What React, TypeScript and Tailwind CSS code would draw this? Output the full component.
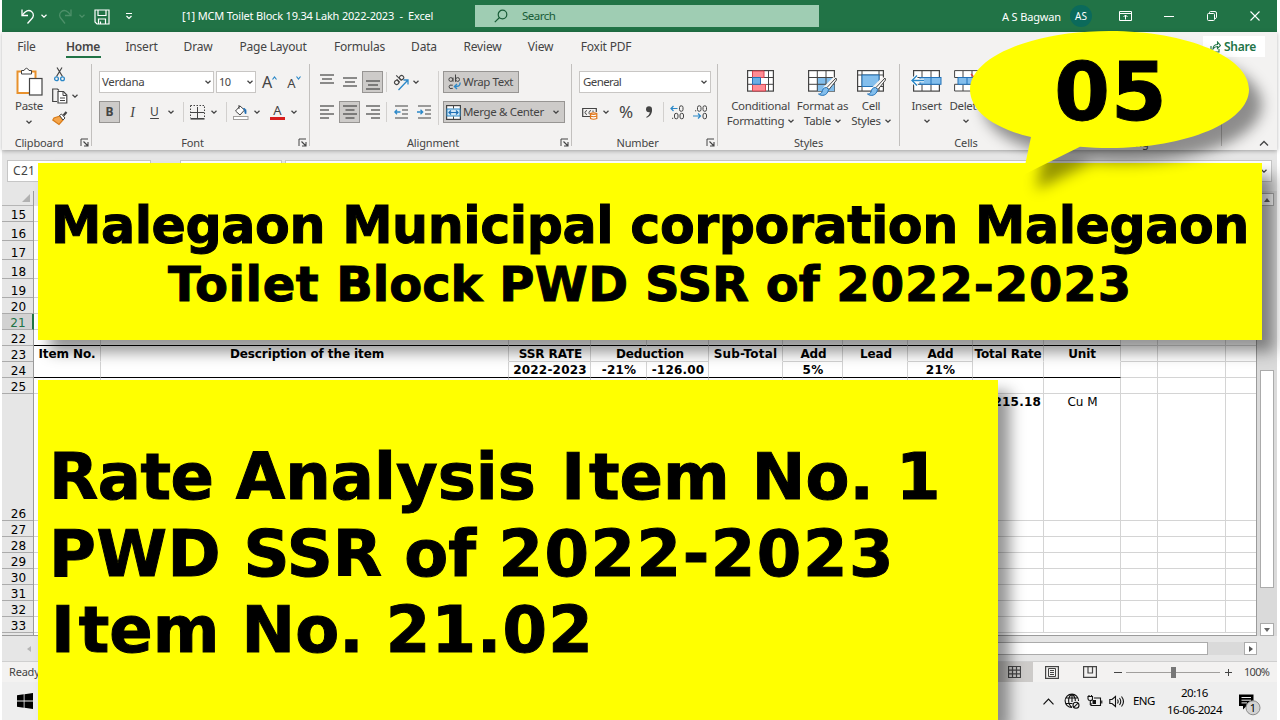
import type { ReactNode } from "react";

const INK = "#444444";
const BLUE = "#2b88c8";

function Chevron({ className = "" }: { className?: string }) {
  return (
    <svg viewBox="0 0 6 4" className={`h-1 w-1.5 shrink-0 ${className}`} fill="none" stroke={INK} strokeWidth="1.3">
      <path d="M0.5 0.7L3 3.1L5.5 0.7" />
    </svg>
  );
}

function Svg({ w, h, className = "", children }: { w: number; h: number; className?: string; children: ReactNode }) {
  return (
    <svg width={w} height={h} viewBox={`0 0 ${w} ${h}`} className={`shrink-0 ${className}`} fill="none" stroke={INK} strokeWidth="1.2">
      {children}
    </svg>
  );
}

function Launcher() {
  return (
    <Svg w={9} h={9} className="absolute right-[2px] -bottom-px">
      <path d="M1 8V1H8" strokeWidth="1" />
      <path d="M3.5 3.5L7.5 7.5M8 4V8H4" strokeWidth="1.1" />
    </Svg>
  );
}

function Group({ label, width, launcher, pad = "", children }: { label: string; width: string; launcher?: boolean; pad?: string; children?: ReactNode }) {
  return (
    <div className={`relative flex h-[82px] shrink-0 flex-col border-r border-[#c2c0be] ${width}`}>
      <div className="h-[71px] shrink-0">{children}</div>
      <div className={`flex h-4 shrink-0 items-center justify-center whitespace-nowrap text-[11px] leading-4 tracking-[-0.15px] ${pad}`}>{label}</div>
      {launcher && <Launcher />}
    </div>
  );
}

function Sep({ className = "" }: { className?: string }) {
  return <div className={`h-5 w-px shrink-0 bg-[#d2d0ce] ${className}`} />;
}

function Lines({ rows, className = "" }: { rows: [number, number, number][]; className?: string }) {
  return (
    <Svg w={14} h={14} className={className}>
      {rows.map(([x, y, w]) => (
        <path key={y} d={`M${x} ${y}h${w}`} />
      ))}
    </Svg>
  );
}

function BigButton({ icon, lines, width, caret }: { icon: ReactNode; lines: string[]; width: string; caret?: boolean }) {
  return (
    <div className={`flex shrink-0 flex-col items-center pt-1.5 ${width}`}>
      <div className="flex h-7 items-start">{icon}</div>
      {lines.map((line, i) => (
        <div key={line} className="flex h-[15px] items-center gap-1 whitespace-nowrap text-[11.500px] tracking-[-0.3px]">
          {line}
          {i === 1 && <Chevron />}
        </div>
      ))}
      {caret && <Chevron className="mt-1.5" />}
    </div>
  );
}

function Brush() {
  return (
    <>
      <path d="M27.5 8.5L17 19" stroke="#f3f2f1" strokeWidth="5" />
      <path d="M28 8L19 17.5L21 19.5L28.5 10Z" fill="#fff" strokeWidth="1" />
      <path d="M18.5 17.5c-3 0-4 2-4.500 4.500c-0.500 1.500-2 2-3.500 2c3 2.500 9 2 10-4.500z" fill="#83beec" stroke="#2372b8" strokeWidth="1" />
    </>
  );
}

function TitleBar() {
  return (
    <header className="flex h-8 shrink-0 items-center bg-[#217346] text-[11px] text-white">
      <Svg w={18} h={18} className="ml-[17px]">
        <g stroke="#fff" strokeWidth="1.3">
          <path d="M3 2.500V8.500H9" />
          <path d="M3.500 8C6 3.500 10 2.500 12.500 4.500C15.500 7 14.500 10 12.500 12L8.500 16.500" />
        </g>
      </Svg>
      <svg viewBox="0 0 6 4" className="ml-1 h-1 w-1.5" fill="none" stroke="#fff" strokeWidth="1.2"><path d="M.5 .7L3 3.100L5.500 .7" /></svg>
      <Svg w={16} h={18} className="ml-2.5">
        <g stroke="#4d9069" strokeWidth="1.300">
          <path d="M14 2.500V8.500H8" />
          <path d="M13.500 8C11 3.500 7 2.500 4.500 4.500C1.500 7 2.500 10 4.500 12L8 16.500" />
        </g>
      </Svg>
      <svg viewBox="0 0 6 4" className="ml-1.5 h-1 w-1.5" fill="none" stroke="#4d9069" strokeWidth="1.2"><path d="M.5 .7L3 3.100L5.500 .7" /></svg>
      <Svg w={16} h={16} className="ml-[9px] mt-0.5">
        <g stroke="#fff" strokeWidth="1.2">
          <path d="M1 1H15V15H3L1 13Z" />
          <path d="M4 1V6.500H12V1M4.500 15V10H11.500V15M6.500 15V12.500" />
        </g>
      </Svg>
      <Svg w={8} h={8} className="ml-[15px]">
        <path d="M1 1.500H7M1.500 4L4 6.500L6.500 4" stroke="#fff" />
      </Svg>
      <div className="ml-[49px] w-[252px] whitespace-pre tracking-[-0.19px]">{"[1] MCM Toilet Block 19.34 Lakh 2022-2023  -  Excel"}</div>
      <div className="ml-[41px] flex h-[22px] w-[344px] items-center bg-[#9fcdb3] text-[11.500px] text-[#185c37]">
        <Svg w={14} h={14} className="ml-[19px]">
          <g stroke="#185c37"><circle cx="8.500" cy="5.500" r="4.300" /><path d="M5.500 8.500L.8 13.200" /></g>
        </Svg>
        <span className="ml-3.5 tracking-[-0.5px]">Search</span>
      </div>
      <div className="ml-[183px] mt-0.5 w-[59px] whitespace-nowrap tracking-[-0.15px]">A S Bagwan</div>
      <div className="ml-[9px] flex size-[22px] items-center justify-center rounded-full bg-[#0b6a5b] text-[10px]">AS</div>
      <Svg w={13} h={10} className="ml-[27px]">
        <g stroke="#fff" strokeWidth="1"><path d="M.5 .5H12.500V9.500H.5ZM.5 2.500H12.500M6.500 8.500V4M4.500 6L6.500 4L8.500 6" /></g>
      </Svg>
      <Svg w={10} h={1} className="ml-8"><path d="M0 .5H10" stroke="#fff" strokeWidth="1" /></Svg>
      <Svg w={10} h={10} className="ml-[33px]">
        <g stroke="#fff" strokeWidth="1"><rect x=".5" y="2.500" width="7" height="7" rx="1" /><path d="M2.500 2.500V1.500Q2.500 .5 3.500 .5H8Q9.500 .5 9.500 2V6.500Q9.500 7.500 7.500 7.500" /></g>
      </Svg>
      <Svg w={10} h={10} className="ml-[33px]"><path d="M.5 .5L9.500 9.500M9.500 .5L.5 9.500" stroke="#fff" strokeWidth="1.1" /></Svg>
    </header>
  );
}

function Tabs() {
  const tabs: [string, string][] = [
    ["File", "w-[49px]"], ["Home", "w-16"], ["Insert", "w-[53px]"], ["Draw", "w-[60px]"], ["Page Layout", "w-[90px]"],
    ["Formulas", "w-[83px]"], ["Data", "w-[46px]"], ["Review", "w-[71px]"], ["View", "w-[45px]"], ["Foxit PDF", "w-[86px]"],
  ];
  return (
    <nav className="flex h-8 shrink-0 text-[12px] tracking-[-0.2px]">
      {tabs.map(([name, width]) => (
        <div key={name} className={`flex justify-center whitespace-nowrap pt-1.5 ${width}`}>
          {name === "Home" ? (
            <span className="h-5 w-[35px] border-b-2 border-[#217346] text-center font-semibold leading-[17px] tracking-[-0.3px]">{name}</span>
          ) : (
            <span className="leading-[17px]">{name}</span>
          )}
        </div>
      ))}
      <div className="mt-1 ml-auto mr-3 flex h-[21px] w-[62px] items-center bg-white pl-[7px] font-semibold text-[#217346]">
        <Svg w={11} h={12}>
          <g stroke="#217346" strokeWidth="1.1"><path d="M1 5V11H9V8M3 8C3 5 5 3.500 7.500 3.500V1L10.500 4.500L7.500 7.500V5.500C5.500 5.500 4 6.500 3 8Z" /></g>
        </Svg>
        <span className="ml-[3px] tracking-[-0.25px]">Share</span>
      </div>
    </nav>
  );
}

function Clipboard() {
  return (
    <Group label="Clipboard" width="w-[90px]" launcher pad="pr-[15px]">
      <div className="flex">
        <div className="ml-3 flex w-[30px] flex-col items-center pt-[3px]">
          <Svg w={27} h={29}>
            <rect x="1.500" y="4.500" width="18" height="21.500" fill="#fff" stroke="#e8912d" strokeWidth="2" />
            <path d="M5.500 7V3.500H8Q10.500 -1 13 3.500H15.500V7Z" fill="#fff" strokeWidth="1" />
            <rect x="13.500" y="11.500" width="12.500" height="16.500" fill="#fff" />
          </Svg>
          <span className="mt-0.5 text-[11.500px] leading-4 tracking-[-0.3px]">Paste</span>
          <Chevron className="mt-1.5" />
        </div>
        <div className="ml-2 flex flex-col pt-[3px]">
          <Svg w={12} h={15} className="ml-0.5">
            <path d="M3 .5L8.500 9.500M8 .5L2.500 9.500" />
            <g stroke={BLUE} strokeWidth="1.3"><circle cx="2.500" cy="11.800" r="1.900" /><circle cx="8.500" cy="11.800" r="1.900" /></g>
          </Svg>
          <div className="mt-1.5 flex items-center">
            <Svg w={16} h={16}>
              <path d="M5 13.500H.7V1H5.500L7 2.500" />
              <path d="M6 3.500H11.500L14.800 7V15H6Z" fill="#fff" />
              <path d="M11 4V7.500H14.500M8 10H13M8 12.500H13" strokeWidth="1" />
            </Svg>
            <Chevron className="ml-1" />
          </div>
          <Svg w={16} h={15} className="mt-[7px]">
            <path d="M8 5L2 7L.8 9L7 13.500L11 9Z" fill="#f5a54a" stroke="#d77b19" />
            <path d="M7.500 4.500L9.500 3L13 7L11 9Z" fill="#fff" strokeWidth="1" />
            <path d="M11.500 4.500L14.500 1" strokeWidth="2.200" />
          </Svg>
        </div>
      </div>
    </Group>
  );
}

function FontGroup() {
  return (
    <Group label="Font" width="w-[218px]" launcher pad="pr-4">
      <div className="flex items-center pl-[7px] pt-[7px]">
        <div className="flex h-[22px] w-[115px] items-center justify-between border border-[#c8c6c4] bg-white pr-0.5 pl-0.5 text-[11.500px] tracking-[-0.35px]">
          Verdana<Chevron />
        </div>
        <div className="ml-0.5 flex h-[22px] w-10 items-center justify-between border border-[#c8c6c4] bg-white pr-0.5 pl-0.5 text-[11px] tracking-[-0.5px]">
          10<Chevron />
        </div>
        <span className="ml-1.5 text-[16px] leading-5">A</span>
        <Svg w={5} h={4} className="mb-2"><path d="M.5 3.500L2.500 1L4.500 3.500" stroke={BLUE} /></Svg>
        <span className="ml-2.5 mt-0.5 text-[13px] leading-5">A</span>
        <Svg w={5} h={4} className="mb-2"><path d="M.5 .5L2.500 3L4.500 .5" stroke={BLUE} /></Svg>
      </div>
      <div className="mt-2 flex h-[22px] items-center pl-[7px]">
        <div className="flex h-[22px] w-[21px] items-center justify-center border border-[#979593] bg-[#cdcbc9] text-[12px] font-bold">B</div>
        <span className="ml-2 w-[9px] text-center font-['Liberation_Serif'] text-[14px] italic">I</span>
        <span className="ml-[13px] w-[9px] text-center text-[12px] underline underline-offset-2">U</span>
        <Chevron className="ml-[9px]" />
        <Sep className="ml-[9px]" />
        <Svg w={15} h={15} className="ml-1.5">
          <path d="M.5 .5H14.500V13M.5 .5V13" strokeDasharray="1.500 1.500" strokeWidth="1" />
          <path d="M.5 13.800H14.500" strokeWidth="1.600" />
          <path d="M7.500 2V13M1 7.500H14" strokeWidth="1" />
        </Svg>
        <Chevron className="ml-1.5" />
        <Sep className="ml-[9px]" />
        <Svg w={16} h={15} className="ml-1.5">
          <path d="M7 1L2.500 6L7 10L11.500 5Z" fill="#fff" strokeWidth="1" />
          <path d="M6 0V4" strokeWidth="1" />
          <path d="M10.500 3.500C13 3 13.500 6 12.800 9C11.500 8.500 12 6 11.500 5Z" fill="#1f6fb5" stroke="#1f6fb5" strokeWidth=".8" />
          <rect x=".5" y="11.500" width="14.500" height="3" fill="#fff" stroke="#a19f9d" strokeWidth="1" />
        </Svg>
        <Chevron className="ml-[5px]" />
        <div className="ml-2.5 flex h-4 w-[15px] flex-col items-center border-b-[3px] border-[#d81e1e]">
          <span className="text-[13px] leading-[13px]">A</span>
        </div>
        <Chevron className="ml-1.5" />
      </div>
    </Group>
  );
}

function Alignment() {
  return (
    <Group label="Alignment" width="w-[262px]" launcher pad="pr-[15px]">
      <div className="flex pt-[7px]">
        <div className="flex w-32 flex-col gap-2 pl-2.5">
          <div className="flex h-[22px] items-center">
            <Lines className="mb-1.5" rows={[[0, 3, 14], [2, 7, 10], [0, 11, 14]]} />
            <Lines className="ml-[9px]" rows={[[0, 3, 14], [2, 7, 10], [0, 11, 14]]} />
            <div className="ml-[5px] flex h-[22px] w-[21px] items-end justify-center border border-[#979593] bg-[#cdcbc9]">
              <Lines rows={[[0, 3, 14], [2, 7, 10], [0, 11, 14]]} />
            </div>
            <Sep className="ml-[3px]" />
            <Svg w={17} h={17} className="ml-1.5">
              <g transform="rotate(-45 5 6)" strokeWidth="1.1">
                <circle cx="2.300" cy="6.800" r="2.100" /><path d="M4.600 4.500V9" />
                <circle cx="9.300" cy="6.800" r="2.100" /><path d="M7 1.500V9" />
              </g>
              <path d="M5.500 16L14.500 6.500M10.500 6H15V10.500" stroke={BLUE} strokeWidth="1.3" />
            </Svg>
            <Chevron className="ml-[3px]" />
          </div>
          <div className="flex h-[22px] items-center">
            <Lines rows={[[0, 1, 14], [0, 5, 9], [0, 9, 14], [0, 13, 9]]} />
            <div className="ml-[5px] flex h-[22px] w-[21px] items-center justify-center border border-[#979593] bg-[#cdcbc9]">
              <Lines rows={[[0, 1, 14], [2.5, 5, 9], [0, 9, 14], [2.5, 13, 9]]} />
            </div>
            <Lines className="ml-[6px]" rows={[[0, 1, 14], [5, 5, 9], [0, 9, 14], [5, 13, 9]]} />
            <Sep className="ml-[6px]" />
            <Svg w={14} h={14} className="ml-[7px]">
              <path d="M1 1H14M8 5H14M8 9H14M1 13H14" />
              <path d="M.8 7H6.500M3 4.800L.8 7L3 9.200" stroke={BLUE} strokeWidth="1.3" />
            </Svg>
            <Svg w={14} h={14} className="ml-[9px]">
              <path d="M1 1H14M8 5H14M8 9H14M1 13H14" />
              <path d="M0 7H5.700M3.500 4.800L5.700 7L3.500 9.200" stroke={BLUE} strokeWidth="1.3" />
            </Svg>
          </div>
        </div>
        <div className="h-[54px] w-px bg-[#d2d0ce]" />
        <div className="ml-1 flex flex-col items-start gap-2 whitespace-nowrap text-[11.500px]">
          <div className="flex h-[22px] w-[76px] items-center border border-[#979593] bg-[#cdcbc9] pl-1 tracking-[-0.4px]">
            <Svg w={13} h={16}>
              <g strokeWidth="1">
                <circle cx="2.800" cy="5.500" r="1.900" /><path d="M5 3.500V7.800M7.500 .5V7.800" /><circle cx="9.600" cy="5.500" r="1.900" />
                <path d="M4.800 11.200Q1 10.200 1 12.800T4.800 14.400" />
              </g>
              <path d="M12 8.500C12.500 12 10 12.500 6.500 12.500M9 10L6.500 12.500L9 15" stroke={BLUE} strokeWidth="1.4" />
            </Svg>
            <span className="ml-0.5">Wrap Text</span>
          </div>
          <div className="flex h-[22px] w-[122px] items-center border border-[#979593] bg-[#cdcbc9] pl-0.5 tracking-[-0.35px]">
            <Svg w={15} h={15}>
              <rect x=".6" y=".6" width="13.800" height="13.800" fill="#fff" />
              <rect x="1" y="4" width="13" height="7" fill="#cfe6f7" stroke={BLUE} strokeWidth="1" />
              <path d="M7.500 1V3.500M7.500 11.500V14" strokeWidth="1" />
              <path d="M3 7.500H12M5 5.500L3 7.500L5 9.500M10 5.500L12 7.500L10 9.500" stroke="#1f6fb5" strokeWidth="1.2" />
            </Svg>
            <span className="ml-0.5">Merge &amp; Center</span>
            <Chevron className="ml-auto mr-[5px]" />
          </div>
        </div>
      </div>
    </Group>
  );
}

function NumberGroup() {
  return (
    <Group label="Number" width="w-[146px]" launcher pad="pr-[14px]">
      <div className="flex flex-col gap-2 pl-[7px] pt-[7px]">
        <div className="flex h-[22px] w-[132px] items-center justify-between border border-[#c8c6c4] bg-white px-[3px] text-[11.500px] tracking-[-0.6px]">
          General<Chevron />
        </div>
        <div className="flex h-[22px] items-center">
          <Svg w={16} h={13} className="ml-[3px] mt-0.5">
            <path d="M8 9.500H.7V1.500H14.300V5" />
            <path d="M5 3.500Q3 4 3 5.500T5 7.500M9 3.500Q7 4 7 5.500T8 7.500M11 3.500V5" strokeWidth="1" />
            <path d="M8.500 6.500V11.500Q11.500 13 14.800 11.500V6.500Q11.500 5 8.500 6.500ZM8.500 9Q11.500 10.500 14.800 9M8.500 6.700Q11.500 8 14.800 6.700" fill="#fff" stroke="#e0761a" />
          </Svg>
          <Chevron className="ml-[5px]" />
          <span className="ml-[9px] w-4 text-center text-[17px] leading-5">%</span>
          <svg viewBox="0 0 8 12" className="ml-[11px] h-3 w-2 shrink-0" fill={INK}>
            <circle cx="4" cy="3.200" r="3" />
            <path d="M7 3.200C7.300 7.500 5 10.500 1.600 11.700L1.200 11C3.500 9.800 4.800 8 4.800 5.500Z" />
          </svg>
          <Sep className="ml-2.5" />
          <Svg w={16} h={15} className="ml-1.5">
            <g strokeWidth="1">
              <rect x="9.500" y=".8" width="3.500" height="5.500" rx="1.700" />
              <rect x="4.500" y="8.300" width="3.500" height="5.500" rx="1.700" />
              <rect x="10" y="8.300" width="3.500" height="5.500" rx="1.700" />
              <path d="M2 13.300h1.200" />
            </g>
            <path d="M1 3.500H7.500M3.500 1L1 3.500L3.500 6" stroke={BLUE} strokeWidth="1.2" />
          </Svg>
          <Svg w={16} h={15} className="ml-[7px]">
            <g strokeWidth="1">
              <rect x="4.500" y=".8" width="3.500" height="5.500" rx="1.700" />
              <rect x="10" y=".8" width="3.500" height="5.500" rx="1.700" />
              <rect x="10" y="8.300" width="3.500" height="5.500" rx="1.700" />
              <path d="M2 5.800h1.200" />
            </g>
            <path d="M0 11H7.500M5 8.500L7.500 11L5 13.500" stroke={BLUE} strokeWidth="1.2" />
          </Svg>
        </div>
      </div>
    </Group>
  );
}

function StylesGroup() {
  return (
    <Group label="Styles" width="w-[182px]">
      <div className="flex">
        <BigButton width="w-[85px]" lines={["Conditional", "Formatting"]} icon={
          <Svg w={27} h={22}>
            <rect x=".6" y=".6" width="25.800" height="20.500" fill="#fff" />
            <path d="M.6 7.500H26.400M.6 14.300H26.400M5.500 1V21M21.500 1V21" strokeWidth="1" />
            <path d="M5.500 1H17V7.500H5.500ZM5.500 14.300H18.500V21H5.500Z" fill="#ff8c94" stroke="#d8434e" strokeWidth="1" />
            <path d="M5.500 7.500H13.500V14.300H5.500Z" fill="#6aaee5" stroke="#2372b8" strokeWidth="1" />
            <path d="M14 8H21V13.800H14Z" fill="#fff" stroke="none" />
          </Svg>
        } />
        <BigButton width="w-[39px]" lines={["Format as", "Table"]} icon={
          <Svg w={29} h={27}>
            <rect x=".6" y=".6" width="25.800" height="20.500" fill="#fff" />
            <rect x="9" y="7.500" width="17.400" height="13.600" fill="#83beec" stroke="none" />
            <path d="M.6 7.500H26.400M.6 14.300H26.400M9.300 1V21M18 1V21" strokeWidth="1" />
            <Brush />
          </Svg>
        } />
        <BigButton width="w-[58px]" lines={["Cell", "Styles"]} icon={
          <Svg w={29} h={27}>
            <rect x=".6" y=".6" width="25.800" height="20.500" fill="#fff" />
            <path d="M5 1V21M22 1V21M.6 5H26.400M.6 16.500H26.400" strokeWidth="1" />
            <rect x="5" y="5" width="17" height="11.500" fill="#83beec" stroke="#2372b8" strokeWidth="1" />
            <Brush />
          </Svg>
        } />
      </div>
    </Group>
  );
}

function CellsGroup() {
  return (
    <Group label="Cells" width="w-[133px]">
      <div className="flex">
        <BigButton width="w-[53px]" lines={["Insert"]} caret icon={
          <Svg w={31} h={22}>
            <rect x="2.600" y=".6" width="25.800" height="20.500" fill="#fff" />
            <path d="M2.600 7.500H28M2.600 14.300H28M11 1V21M20 1V21" strokeWidth="1" />
            <rect x="9" y="7.500" width="21" height="6.800" fill="#83beec" stroke="#2372b8" strokeWidth="1" />
            <path d="M20 7.500V14.300" stroke="#2372b8" strokeWidth="1" />
            <path d="M1 10.500H13M6 5.500L1 10.500L6 15.500" stroke="#fff" strokeWidth="3.500" />
            <path d="M1 10.500H13M6 5.500L1 10.500L6 15.500" stroke={BLUE} strokeWidth="1.4" />
          </Svg>
        } />
        <BigButton width="w-[26px]" lines={["Delete"]} caret icon={
          <Svg w={28} h={22} className="ml-1">
            <path d="M.6 .6H26V7.500H.6ZM.6 14.300H26V21H.6ZM9 1V7M18 1V7M9 14.500V21M18 14.500V21" fill="#fff" strokeWidth="1" />
            <path d="M4 7.500H22V14.300H4ZM13 7.500V14" fill="#83beec" stroke="#2372b8" strokeWidth="1" />
            <path d="M17 4L27 15M27 4L17 15" stroke="#e03b3b" strokeWidth="1.3" />
          </Svg>
        } />
      </div>
    </Group>
  );
}

type RowDef = [number, string];
const ROWS: RowDef[] = [
  [15, "h-4"], [16, "h-[19px]"], [17, "h-[19px]"], [18, "h-[19px]"], [19, "h-[19px]"], [20, "h-4"], [21, "h-4"], [22, "h-4"], [23, "h-4"], [24, "h-4"],
  [25, "h-4"], [26, "h-[127px]"], [27, "h-4"], [28, "h-4"], [29, "h-4"], [30, "h-4"], [31, "h-4"], [32, "h-4"], [33, "h-4"],
];

const COLS = ["w-[67px]", "w-[408px]", "w-[82px]", "w-[56px]", "w-[62px]", "w-[74px]", "w-[60px]", "w-[65px]", "w-[65px]", "w-[71px]", "w-[77px]", "w-[37px]", "w-[68px]", "w-[31px]"];

const TEXT: Record<number, string[]> = {
  24: ["", "", "2022-2023", "-21%", "-126.00", "", "5%", "", "21%"],
  26: ["", "", "", "", "", "", "", "", "", "1215.18", "Cu M"],
};

const HEADS: [string, string, boolean][] = [
  ["Item No.", "w-[67px]", false], ["Description of the item", "w-[408px] pl-[5px]", false], ["SSR RATE", "w-[82px] pl-0.5", true], ["Deduction", "w-[118px] pl-px", true],
  ["Sub-Total", "w-[74px] tracking-[0.2px]", false], ["Add", "w-[60px] pl-0.5", true], ["Lead", "w-[65px] pl-0.5", false], ["Add", "w-[65px] pl-px", true],
  ["Total Rate", "w-[71px]", false], ["Unit", "w-[77px]", false], ["", "w-[37px]", true], ["", "w-[68px]", true], ["", "w-[31px]", true],
];

function rowBorder(n: number, col: number) {
  if ((n === 22 || n === 24) && col < 11) return "border-b-black";
  return "border-b-[#d4d4d4]";
}

function Sheet() {
  return (
    <div className="flex h-[445px] shrink-0 font-['DejaVu_Sans','Open_Sans',sans-serif] text-[12px] text-black">
      <div className="flex w-8 shrink-0 flex-col border-r border-b border-[#9b9b9b] bg-[#e6e6e6]">
        <div className="flex h-[15px] shrink-0 items-end justify-end border-b border-[#b5b5b5] pr-[3px] pb-[3px]">
          <svg viewBox="0 0 8 8" className="size-2" fill="#b1b1b1"><path d="M8 0V8H0Z" /></svg>
        </div>
        {ROWS.map(([n, h]) => (
          <div key={n} className={`flex shrink-0 items-end justify-center border-b border-[#ababab] pl-0.5 leading-[12px] ${h} ${n === 21 ? "-mr-px border-r-2 border-r-[#217346] bg-[#d2d2d2] text-[#217346]" : ""}`}>
            {n}
          </div>
        ))}
      </div>
      <div className="flex w-[1223px] shrink-0 flex-col overflow-hidden border-r border-b border-[#9b9b9b] bg-white">
        <div className="h-[15px] shrink-0 bg-[#e6e6e6]" />
        {ROWS.map(([n, h]) => (
          <div key={n} className={`flex shrink-0 ${h}`}>
            {n === 23
              ? HEADS.map(([t, w, line], i) => (
                  <div key={i} className={`flex shrink-0 justify-center whitespace-nowrap border-r border-b border-r-[#d4d4d4] text-[12px] font-bold leading-[17px] tracking-[-0.1px] ${w} ${line ? "border-b-[#d4d4d4]" : "border-b-transparent"}`}>{t}</div>
                ))
              : COLS.map((w, i) => (
                  <div key={i} className={`flex shrink-0 whitespace-nowrap border-r border-b border-r-[#d4d4d4] text-[12px] leading-[17px] ${w} ${rowBorder(n, i)} ${i === 10 ? "font-normal" : "font-bold tracking-[0.2px]"} ${i === 9 ? "justify-end pr-0.5" : "justify-center pl-px"}`}>
                    {TEXT[n]?.[i] ?? ""}
                  </div>
                ))}
          </div>
        ))}
      </div>
      <div className="flex w-5 shrink-0 flex-col items-center bg-[#dadada] px-[3px] pt-[2px]">
        <div className="flex h-[13px] w-full items-center justify-center border border-[#ababab] bg-white"><svg viewBox="0 0 6 4" className="h-1 w-1.5" fill="#666"><path d="M0 4L3 0L6 4Z" /></svg></div>
        <div className="mt-[164px] h-[218px] w-full border border-[#ababab] bg-white" />
        <div className="mt-auto flex h-[13px] w-full items-center justify-center border border-[#ababab] bg-white"><svg viewBox="0 0 6 4" className="h-1 w-1.5" fill="#666"><path d="M0 0L3 4L6 0Z" /></svg></div>
      </div>
    </div>
  );
}

function StatusBar() {
  return (
    <div className="flex h-[21px] shrink-0 items-center border-t border-[#cfcfcf] bg-[#f3f2f1] text-[11px]">
      <span className="ml-[7px] mt-px tracking-[-0.2px]">Ready</span>
      <div className="ml-auto flex h-full w-[38px] items-center justify-center bg-[#cdcbc9]">
        <Svg w={13} h={12}><path d="M.5 .5H12.500V11.500H.5ZM.5 4.200H12.500M.5 7.800H12.500M4.500 .5V11.500M8.500 .5V11.500" /></Svg>
      </div>
      <Svg w={14} h={13} className="ml-3"><rect x=".6" y=".6" width="12.800" height="11.800" /><path d="M3.500 2.500H10.500V10.500H3.500ZM5 4.500H9M5 6.500H9M5 8.500H9" strokeWidth="1" /></Svg>
      <Svg w={14} h={12} className="ml-6"><path d="M.6 .6H13.400V11.400H.6ZM5 1V7H9.500V1M9.500 7V1" /></Svg>
      <Svg w={8} h={1} className="ml-[17px]"><path d="M0 .5H8" strokeWidth="1" /></Svg>
      <div className="ml-1 flex h-3 w-[94px] items-center justify-center bg-[linear-gradient(#a19f9d,#a19f9d)] bg-[length:100%_1px] bg-center bg-no-repeat">
        <div className="h-[11px] w-[5px] bg-[#777]" />
      </div>
      <Svg w={7} h={7} className="ml-[5px]"><path d="M0 3.500H7M3.500 0V7" strokeWidth="1" /></Svg>
      <span className="ml-[12px] w-[33px] tracking-[-0.7px]">100%</span>
    </div>
  );
}

function Taskbar() {
  return (
    <div className="flex h-[38px] shrink-0 items-center bg-[#eeeeee] text-[11.500px] text-black">
      <svg viewBox="0 0 16 16" className="ml-[15px] size-4" fill="#000"><path d="M0 2.200L6.700 1.300V7.600H0ZM7.500 1.200L16 0V7.600H7.500ZM0 8.400H6.700V14.700L0 13.800ZM7.500 8.400H16V16L7.500 14.800Z" /></svg>
      <Svg w={11} h={7} className="ml-auto"><path d="M.5 6.300L5.500 1L10.500 6.300" stroke="#111" /></Svg>
      <Svg w={16} h={16} className="ml-[10px]">
        <g stroke="#111" strokeWidth="1.1"><path d="M8 14.500A6.700 6.700 0 1 1 14.500 8M8 14.500C3.500 11 3.500 4 8 1C10.500 3 11.500 5 11.300 8M1.800 5H14M1.800 10.500H8.500M8 1V9" /><circle cx="12" cy="12.200" r="3" fill="#eee" /><path d="M10 14.200L14 10.200" /></g>
      </Svg>
      <Svg w={16} h={12} className="ml-[7px]">
        <g stroke="#111" strokeWidth="1.1"><path d="M7 3H13.500V10.500H4V8M14.800 5.500V8.500" /><path d="M1 1.500H5.500V4Q5.500 5.500 3.300 5.500T1 4ZM3.300 5.500V10M2 0V1.500M4.500 0V1.500" /><rect x="5.500" y="5" width="3.500" height="4" fill="#111" stroke="none" /></g>
      </Svg>
      <Svg w={16} h={13} className="ml-[6px]">
        <g stroke="#111" strokeWidth="1.1"><path d="M.8 4.500H3L6.500 1.500V11.500L3 8.500H.8Z" /><path d="M8.500 4.500Q9.800 6.500 8.500 8.500M10.500 3Q13 6.500 10.500 10M12.500 1.500Q16.500 6.500 12.500 11.500" /></g>
      </Svg>
      <span className="ml-[8px] w-[22px] tracking-[-0.6px]">ENG</span>
      <div className="ml-3 flex w-[55px] flex-col items-center whitespace-nowrap text-center leading-[17px] tracking-[-0.5px]">
        <span>20:16</span>
        <span>16-06-2024</span>
      </div>
      <Svg w={24} h={24} className="ml-4 mr-[15px] mt-2">
        <path d="M1 1.500H15.500V13H8.500L5 16.500V13H1Z" fill="#000" stroke="none" />
        <path d="M3.500 4.500H13M3.500 7.200H13M3.500 9.900H9" stroke="#eee" strokeWidth="1" />
        <circle cx="15" cy="14.800" r="7" fill="#d2d2d2" stroke="#8a8a8a" strokeWidth="1" />
        <text x="15" y="18.800" fontSize="11" textAnchor="middle" fill="#000" stroke="none">1</text>
      </Svg>
    </div>
  );
}

function Callout() {
  return (
    <div className="absolute top-[31px] left-[970px] h-[150px] w-[280px]">
      <svg viewBox="0 0 280 150" className="absolute inset-0 size-full overflow-visible drop-shadow-[13px_15px_7px_rgba(0,0,0,0.42)]" fill="#ffff00">
        <path d="M61 106C22 97 0 79 0 58.500C0 26 62 0 139.500 0S279 26 279 58.500S217 117 139.500 117C130 117 120 116.600 110 115.800L53 144Z" />
      </svg>
      <div className="relative flex h-[123px] items-center justify-center pl-0.5 text-[80px] font-bold leading-none tracking-[0.015em]">05</div>
    </div>
  );
}

export default function App() {
  return (
    <div className="relative h-[720px] w-[1280px] overflow-hidden bg-white font-['Noto_Sans','Open_Sans',sans-serif] text-[#444444]">
      <div className="ml-0.5 flex h-[720px] w-[1275px] flex-col bg-[#e6e6e6]">
        <TitleBar />
        <div className="flex h-[118px] shrink-0 flex-col bg-[#f3f2f1] shadow-[0_1px_4px_rgba(0,0,0,0.3)]">
          <Tabs />
          <div className="flex">
            <Clipboard />
            <FontGroup />
            <Alignment />
            <NumberGroup />
            <StylesGroup />
            <CellsGroup />
            <Group label="Editing" width="w-[189px]" pad="pl-2" />
            <Svg w={10} h={7} className="mt-[76px] ml-[37px]"><path d="M1 5.500L5 1.500L9 5.500" strokeWidth="1.3" /></Svg>
          </div>
        </div>
        <div className="flex h-[41px] shrink-0 items-start pt-2.5 pl-[5px] text-[12px]">
          <div className="flex h-[22px] w-36 items-center border border-[#c6c6c6] bg-white pl-[5px] tracking-[0.3px]">C21</div>
          <div className="ml-[29px] h-[22px] w-[102px] border border-[#c6c6c6] bg-white" />
          <div className="ml-[3px] flex h-[22px] w-[987px] items-center justify-end border border-[#c6c6c6] bg-white pr-1"><Chevron /></div>
        </div>
        <Sheet />
        <div className="flex h-[25px] shrink-0 items-center">
          <svg viewBox="0 0 4 6" className="ml-[25px] h-1.5 w-1" fill="#b5b5b5"><path d="M4 0V6L0 3Z" /></svg>
          <div className="ml-[300px] flex h-[13px] flex-1 bg-[#dadada]">
            <div className="h-[13px] w-[877px] border border-[#ababab] bg-white" />
          </div>
          <div className="mr-5 flex h-[13px] w-[13px] items-center justify-center border border-[#ababab] bg-white"><svg viewBox="0 0 4 6" className="h-1.5 w-1" fill="#555"><path d="M0 0V6L4 3Z" /></svg></div>
        </div>
        <StatusBar />
        <Taskbar />
      </div>

      <div className="font-['DejaVu_Sans','Open_Sans',sans-serif] font-bold text-black [-webkit-text-stroke:1px_#000]">
        <div className="absolute top-[163px] left-[38px] flex h-[177px] w-[1224px] flex-col items-center justify-center whitespace-nowrap bg-[#ffff00] pt-[7px] leading-[59px] shadow-[12px_12px_14px_rgba(0,0,0,0.42)]">
          <div className="text-[50.670px] tracking-[-0.009em]">Malegaon Municipal corporation Malegaon</div>
          <div className="text-[48px]">
            <span className="tracking-[0.013em]">Toilet</span> Block <span className="tracking-[0.008em]">PWD</span> SSR of{" "}
            <span className="tracking-[0.020em]">2022-2023</span>
          </div>
        </div>
        <div className="absolute top-[380px] left-[38px] flex h-[340px] w-[960px] flex-col justify-center whitespace-nowrap bg-[#ffff00] pt-[8px] pl-[11px] text-[64px] leading-[76.500px] shadow-[12px_12px_14px_rgba(0,0,0,0.42)]">
          <div>
            <span className="tracking-[-0.008em]">Rate</span> Analysis <span className="mr-[0.06em] ml-[0.05em]">I</span>tem No. 1
          </div>
          <div>
            <span className="tracking-[0.008em]">PWD</span> SSR of <span className="tracking-[0.024em]">2022-2023</span>
          </div>
          <div>
            <span className="mr-[0.06em] ml-0.5">I</span>tem No. <span className="tracking-[0.018em]">21.02</span>
          </div>
        </div>
        <Callout />
      </div>
    </div>
  );
}
